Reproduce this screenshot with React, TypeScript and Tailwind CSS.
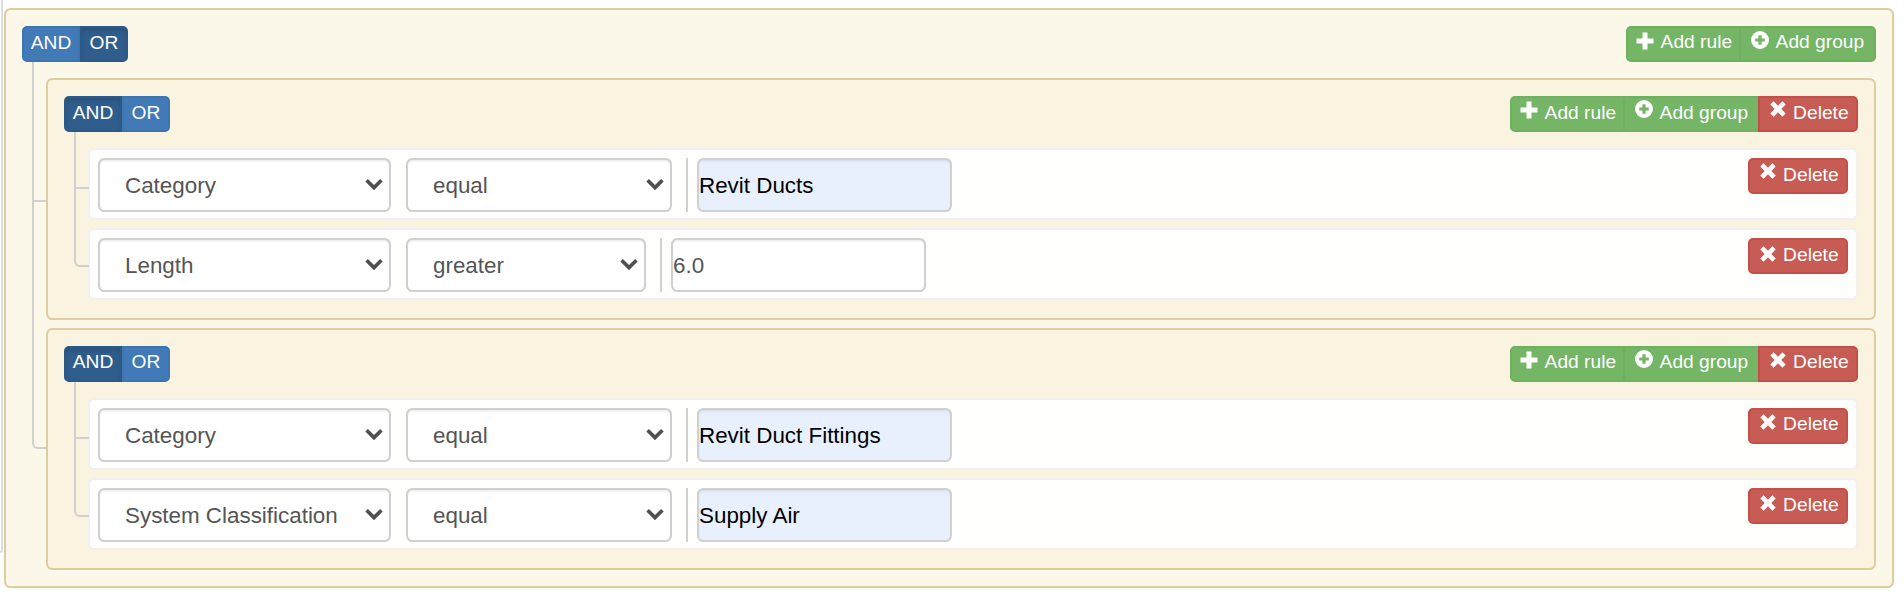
import React from 'react';

type Rule = {
  field: string;
  operator: string;
  value: string;
  opWidth: string;
  autofill: boolean;
  shift: string;
  raised: boolean;
};

type Group = {
  condition: 'AND' | 'OR';
  shift: string;
  raised: boolean;
  rules: Rule[];
};

const groups: Group[] = [
  {
    condition: 'AND',
    shift: 'pb-[2px]',
    raised: true,
    rules: [
      { field: 'Category', operator: 'equal', value: 'Revit Ducts', opWidth: 'w-[266px]', autofill: true, shift: 'pb-[2px]', raised: true },
      { field: 'Length', operator: 'greater', value: '6.0', opWidth: 'w-[240px]', autofill: false, shift: 'pb-[2px]', raised: false },
    ],
  },
  {
    condition: 'AND',
    shift: 'pb-[6px]',
    raised: false,
    rules: [
      { field: 'Category', operator: 'equal', value: 'Revit Duct Fittings', opWidth: 'w-[266px]', autofill: true, shift: 'pb-[6px]', raised: false },
      { field: 'System Classification', operator: 'equal', value: 'Supply Air', opWidth: 'w-[266px]', autofill: true, shift: 'pb-[2px]', raised: false },
    ],
  },
];

const PlusIcon = ({ raised }: { raised: boolean }) => (
  <svg
    viewBox="0 0 18 18"
    className={`inline-block w-[18px] h-[18px] mr-[7px] align-middle fill-white ${raised ? '-mt-[7px]' : '-mt-[4px]'}`}
  >
    <path d="M6.5 0.5h5v6h6v5h-6v6h-5v-6h-6v-5h6z" />
  </svg>
);

const PlusSignIcon = ({ raised }: { raised: boolean }) => (
  <svg
    viewBox="0 0 18 18"
    className={`inline-block w-[18px] h-[18px] mr-[7px] align-middle fill-white ${raised ? '-mt-[10px]' : '-mt-[6px]'}`}
  >
    <path
      fillRule="evenodd"
      d="M9 0a9 9 0 1 1 0 18A9 9 0 0 1 9 0zM7.4 4.2v3.2H4.2v3.2h3.2v3.2h3.2v-3.2h3.2V7.4h-3.2V4.2z"
    />
  </svg>
);

const RemoveIcon = ({ raised }: { raised: boolean }) => (
  <svg
    viewBox="0 0 16 16"
    className={`inline-block w-[16px] h-[16px] ml-[2px] mr-[7.5px] align-middle fill-white ${raised ? '-mt-[9px]' : '-mt-[4px]'}`}
  >
    <path d="M3.6 0.3L8 4.7 12.4 0.3 15.7 3.6 11.3 8l4.4 4.4-3.3 3.3L8 11.3l-4.4 4.4-3.3-3.3L4.7 8 0.3 3.6z" />
  </svg>
);

const Chevron = () => (
  <svg
    viewBox="0 0 18 13"
    className="absolute right-[8px] top-[20px] w-[18px] h-[13px] pointer-events-none fill-none stroke-[#4f4f4f] stroke-[3.6]"
  >
    <path d="M1.6 2.2L9 9.6l7.4-7.4" />
  </svg>
);

type BtnProps = { shift: string; raised: boolean };

function AddRuleBtn({ shift, raised }: BtnProps) {
  return (
    <button
      className={`h-[36px] w-[115px] pl-[8px] text-left whitespace-nowrap bg-[#74b566] border-2 border-[#6fb061] rounded-l-[5px] text-white text-[19.2px] leading-[28px] ${shift}`}
    >
      <PlusIcon raised={raised} />
      Add rule
    </button>
  );
}

function AddGroupBtn({ last, shift, raised }: BtnProps & { last: boolean }) {
  return (
    <button
      className={`h-[36px] pl-[10px] text-left whitespace-nowrap bg-[#74b566] border-y-2 border-[#6fb061] text-white text-[19.2px] leading-[28px] ${shift} ${
        last ? 'w-[135px] border-r-2 rounded-r-[5px]' : 'w-[133px]'
      }`}
    >
      <PlusSignIcon raised={raised} />
      Add group
    </button>
  );
}

function DeleteBtn({ grouped, shift, raised }: BtnProps & { grouped: boolean }) {
  return (
    <button
      className={`h-[36px] w-[100px] pl-[8px] text-left whitespace-nowrap bg-[#c75c54] border-2 border-[#c1504a] text-white text-[19.2px] leading-[28px] ${shift} ${
        grouped ? 'rounded-r-[5px]' : 'rounded-[5px]'
      }`}
    >
      <RemoveIcon raised={raised} />
      Delete
    </button>
  );
}

function ConditionToggle({ active, shift }: { active: 'AND' | 'OR'; shift: string }) {
  const on = 'bg-[#2f5e8e] border-[#2c5986] shadow-[inset_0_3px_5px_rgba(0,0,0,0.125)]';
  const off = 'bg-[#417ab6] border-[#3d75ae]';
  return (
    <div className="flex h-[36px] text-white text-[19.2px] leading-[28px]">
      <button className={`w-[58px] border-2 rounded-l-[5px] ${shift} ${active === 'AND' ? on : off}`}>AND</button>
      <button className={`w-[48px] border-2 rounded-r-[5px] ${shift} ${active === 'OR' ? on : off}`}>OR</button>
    </div>
  );
}

function SelectBox({ value, width }: { value: string; width: string }) {
  return (
    <div className={`relative shrink-0 h-[54px] ${width}`}>
      <select
        defaultValue={value}
        className="w-full h-full appearance-none bg-white pt-[2px] pl-[25px] pr-[30px] text-[22.4px] text-[#555] border-2 border-[#d0d0d0] rounded-[6.4px] shadow-[inset_0_1.6px_1.6px_rgba(0,0,0,0.075)] outline-none"
      >
        <option value={value}>{value}</option>
      </select>
      <Chevron />
    </div>
  );
}

function RuleRow({ rule, index }: { rule: Rule; index: number }) {
  return (
    <li className="relative h-[72px] pt-[8px] pl-[8px] pr-[8px] flex items-start bg-[#fefefd] border-2 border-[#f0f0ee] rounded-[6px]">
      {index === 0 ? (
        <span className="absolute -left-[16px] -top-[18px] h-[57px] w-[15px] border-l-2 border-b-2 border-[#d0d0d0]" />
      ) : (
        <span className="absolute -left-[16px] -top-[43px] h-[80px] w-[15px] border-l-2 border-b-2 border-[#d0d0d0] rounded-bl-[6px]" />
      )}
      <SelectBox value={rule.field} width="w-[293px]" />
      <div className="ml-[15px]">
        <SelectBox value={rule.operator} width={rule.opWidth} />
      </div>
      <div className="ml-[14px] w-[2px] h-[54px] bg-[#d0d0d0]" />
      <input
        defaultValue={rule.value}
        className={`ml-[9px] w-[255px] h-[54px] pt-[2px] pl-0 text-[22.4px] border-2 border-[#d0d0d0] rounded-[6.4px] shadow-[inset_0_1.6px_1.6px_rgba(0,0,0,0.075)] outline-none ${
          rule.autofill ? 'bg-[#e8f0fe] text-black' : 'bg-white text-[#555]'
        }`}
      />
      <div className="ml-auto">
        <DeleteBtn grouped={false} shift={rule.shift} raised={rule.raised} />
      </div>
    </li>
  );
}

function GroupBox({ group, index }: { group: Group; index: number }) {
  return (
    <li
      className={`relative bg-[#faf3e0] border-2 border-[#dfcd9f] rounded-[6.4px] px-[16px] pt-[16px] ${
        index === 0 ? 'pb-[17.5px]' : 'pb-[18.5px]'
      }`}
    >
      {index === 0 ? (
        <span className="absolute -left-[16px] -top-[18px] h-[140px] w-[14px] border-l-2 border-b-2 border-[#d0d0d0]" />
      ) : (
        <span className="absolute -left-[16px] -top-[127.5px] h-[247px] w-[14px] border-l-2 border-b-2 border-[#d0d0d0] rounded-bl-[6px]" />
      )}
      <div className="flex justify-between mb-[16px]">
        <ConditionToggle active={group.condition} shift={group.shift} />
        <div className="flex">
          <AddRuleBtn shift={group.shift} raised={group.raised} />
          <AddGroupBtn last={false} shift={group.shift} raised={group.raised} />
          <DeleteBtn grouped shift={group.shift} raised={group.raised} />
        </div>
      </div>
      <ul className="flex flex-col gap-[8px] pl-[24px]">
        {group.rules.map((r, i) => (
          <RuleRow key={i} rule={r} index={i} />
        ))}
      </ul>
    </li>
  );
}

export default function App() {
  return (
    <div className="relative h-[600px] bg-white pt-[8px] pl-[4px] pr-[10.4px] font-['Liberation_Sans',Arial,sans-serif]">
      <div className="absolute left-0 top-0 h-[553px] w-[3.2px] border-r-2 border-b-2 border-[#ddd] rounded-br-[4px]" />
      <div className="relative bg-[#fcf8e9] border-2 border-[#dfcd9f] rounded-[6.4px] p-[16px]">
        <div className="flex justify-between mb-[16px]">
          <ConditionToggle active="OR" shift="pb-[2px]" />
          <div className="flex">
            <AddRuleBtn shift="pb-[4px]" raised={false} />
            <AddGroupBtn last shift="pb-[4px]" raised={false} />
          </div>
        </div>
        <ul className="flex flex-col gap-[8px] pl-[24px]">
          {groups.map((g, i) => (
            <GroupBox key={i} group={g} index={i} />
          ))}
        </ul>
      </div>
    </div>
  );
}
